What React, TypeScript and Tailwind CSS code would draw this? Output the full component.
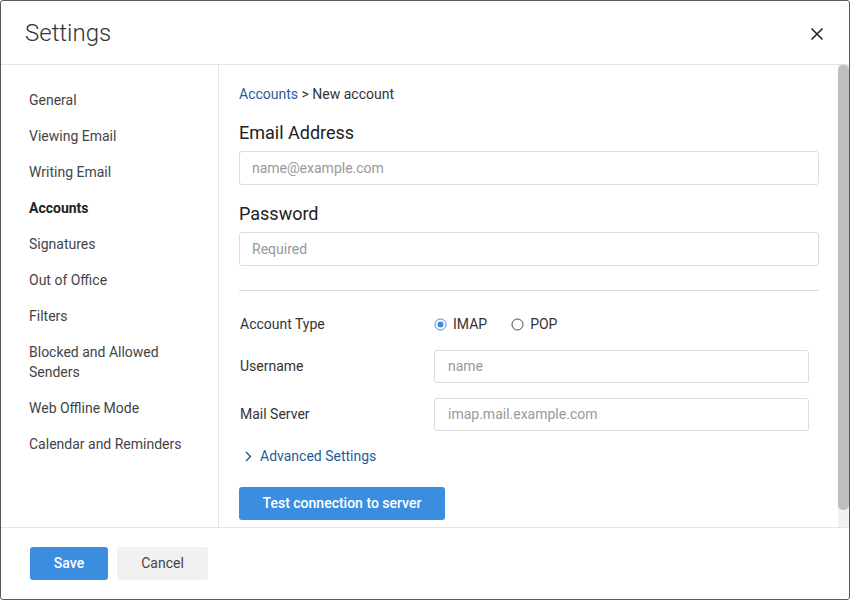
import React from "react";

const font = { fontFamily: "Roboto, 'Noto Sans', Arial, sans-serif" };

function Radio({ checked }: { checked?: boolean }) {
  return (
    <svg width="13" height="13" viewBox="0 0 13 13" className="shrink-0">
      <circle cx="6.5" cy="6.5" r="5.5" fill="white" stroke={checked ? "#3b8de0" : "#444"} strokeWidth="1" />
      {checked && <circle cx="6.5" cy="6.5" r="3" fill="#3b8de0" />}
    </svg>
  );
}

export default function App() {
  const nav = [
    "General",
    "Viewing Email",
    "Writing Email",
    "Accounts",
    "Signatures",
    "Out of Office",
    "Filters",
    "Blocked and Allowed Senders",
    "Web Offline Mode",
    "Calendar and Reminders",
  ];
  return (
    <div
      className="w-[850px] h-[600px] bg-white border border-[#5a5a5a] rounded-[3px] flex flex-col overflow-hidden text-[#333]"
      style={font}
    >
      {/* header */}
      <div className="h-[64px] shrink-0 border-b border-[#e3e3e3] flex items-center justify-between pl-[24px] pr-[25px]">
        <div className="text-[24px] font-light text-[#333] leading-[30px] mt-[1px]">Settings</div>
        <svg width="14" height="14" viewBox="0 0 14 14" className="mt-[3px]">
          <path d="M1.5 1.5 L12.5 12.5 M12.5 1.5 L1.5 12.5" stroke="#222" strokeWidth="1.6" fill="none" />
        </svg>
      </div>

      {/* body */}
      <div className="flex-1 flex min-h-0">
        <div className="w-[218px] shrink-0 border-r border-[#e3e3e3] pt-[17px] pl-[28px] pr-[28px]">
          {nav.map((n) => (
            <div
              key={n}
              className={
                "py-[8px] text-[14px] leading-[20px] " +
                (n === "Accounts" ? "font-bold text-[#222]" : "text-[#444]")
              }
            >
              {n}
            </div>
          ))}
        </div>

        <div className="flex-1 flex min-w-0">
          <div className="flex-1 pl-[20px] pr-[19px] pt-[19px] min-w-0">
            <div className="text-[14px] leading-[20px] text-[#333]">
              <span className="text-[#1f5b9b]">Accounts</span> &gt; New account
            </div>

            <div className="mt-[17px] text-[18px] leading-[24px] text-[#222]">Email Address</div>
            <div className="mt-[6px] h-[34px] border border-[#dcdcdc] rounded-[3px] flex items-center pl-[12px] text-[14px] text-[#999]">
              name@example.com
            </div>

            <div className="mt-[17px] text-[18px] leading-[24px] text-[#222]">Password</div>
            <div className="mt-[6px] h-[34px] border border-[#dcdcdc] rounded-[3px] flex items-center pl-[12px] text-[14px] text-[#999]">
              Required
            </div>

            <div className="mt-[24px] border-t border-[#dcdcdc]" />

            <div className="mt-[23px] flex items-center h-[20px] text-[14px]">
              <div className="w-[195px] pl-[1px] text-[#333]">Account Type</div>
              <div className="flex items-center gap-[6px]">
                <Radio checked />
                <span className="text-[#333]">IMAP</span>
              </div>
              <div className="flex items-center gap-[6px] ml-[24px]">
                <Radio />
                <span className="text-[#333]">POP</span>
              </div>
            </div>

            <div className="mt-[16px] flex items-center text-[14px]">
              <div className="w-[195px] pl-[1px] text-[#333]">Username</div>
              <div className="w-[375px] h-[33px] border border-[#dcdcdc] rounded-[3px] flex items-center pl-[13px] text-[#999]">
                name
              </div>
            </div>

            <div className="mt-[15px] flex items-center text-[14px]">
              <div className="w-[195px] pl-[1px] text-[#333]">Mail Server</div>
              <div className="w-[375px] h-[33px] border border-[#dcdcdc] rounded-[3px] flex items-center pl-[13px] text-[#999]">
                imap.mail.example.com
              </div>
            </div>

            <div className="mt-[15px] flex items-center h-[20px] text-[14px] text-[#1f5b9b] pl-[6px] gap-[8px]">
              <svg width="7" height="11" viewBox="0 0 7 11">
                <path d="M1 1 L5.5 5.5 L1 10" stroke="#1f4f80" strokeWidth="1.3" fill="none" />
              </svg>
              <span>Advanced Settings</span>
            </div>

            <div className="mt-[21px] w-[206px] h-[33px] bg-[#3b8de0] rounded-[3px] flex items-center justify-center text-white text-[14px] font-medium">
              Test connection to server
            </div>
          </div>

          {/* scrollbar */}
          <div className="w-[11px] shrink-0 bg-[#f1f1f1] flex flex-col">
            <div className="h-[445px] bg-[#bfbfbf] rounded-t-[5px] rounded-b-[5px]" />
          </div>
        </div>
      </div>

      {/* footer */}
      <div className="h-[72px] shrink-0 border-t border-[#e3e3e3] flex items-center gap-[9px] pl-[29px]">
        <div className="w-[78px] h-[33px] bg-[#3b8de0] rounded-[3px] flex items-center justify-center text-white text-[14px] font-medium">
          Save
        </div>
        <div className="w-[91px] h-[33px] bg-[#f1f1f1] rounded-[3px] flex items-center justify-center text-[#444] text-[14px]">
          Cancel
        </div>
      </div>
    </div>
  );
}
